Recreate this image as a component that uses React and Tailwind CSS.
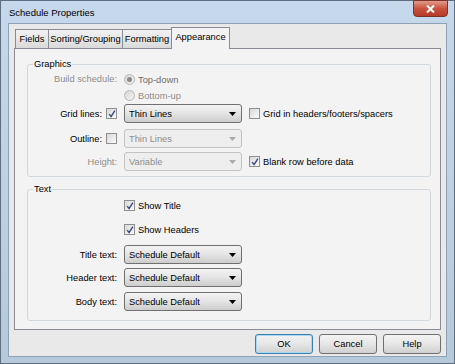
import { useState } from "react";

const font = { fontFamily: '"Liberation Sans", Arial, sans-serif' };

/* small win7 style checkbox */
const Check = ({ checked }) => (
  <span className="inline-flex w-[11px] h-[11px] border border-[#8e8f8f] bg-gradient-to-br from-[#d8d8d8] to-[#fbfbfb] items-center justify-center shrink-0">
    {checked && (
      <svg width="8" height="8" viewBox="0 0 9 9">
        <path d="M1.2 4.6 L3.5 7.3 L7.8 0.8" fill="none" stroke="#3d4d85" strokeWidth="1.6" />
      </svg>
    )}
  </span>
);

const Radio = ({ checked }) => (
  <span className="inline-flex w-[11px] h-[11px] rounded-full border border-[#b7b7b7] bg-gradient-to-br from-[#d6d6d6] to-[#f4f4f4] items-center justify-center shrink-0">
    {checked && <span className="w-[5px] h-[5px] rounded-full bg-[#8a8a8a]" />}
  </span>
);

const Select = ({ value, disabled }) => (
  <div className={`w-[118px] h-[19px] rounded-[3px] border flex items-center pl-[4px] pr-[5px] ${disabled ? "border-[#c3c3c3] bg-[#eeeeee] text-[#8d8d8d]" : "border-[#707070] bg-gradient-to-b from-[#f4f4f4] via-[#e4e4e4] to-[#cdcdcd] text-black"}`}>
    <span className="flex-1 truncate">{value}</span>
    <svg width="7" height="4" viewBox="0 0 7 4">
      <path d="M0 0 H7 L3.5 4 Z" fill={disabled ? "#a9a9a9" : "#000"} />
    </svg>
  </div>
);

const Row = ({ label, dim, check, checked, children, className = "" }) => (
  <div className={`flex items-center h-[19px] ${className}`}>
    <div className="w-[89px] flex items-center justify-end gap-[4px]">
      <span className={dim ? "text-[#8d8d8d]" : "text-black"}>{label}</span>
      {check && <Check checked={checked} />}
    </div>
    <div className="ml-[7px] flex items-center gap-[7px]">{children}</div>
  </div>
);

const Group = ({ title, className = "", children }) => (
  <div className={`relative border border-[#d2d9de] rounded-[3px] ml-[12px] mr-[9px] ${className}`}>
    <span className="absolute -top-[8px] left-[5px] px-[1px] bg-[#f3f3f3] leading-[14px]">{title}</span>
    {children}
  </div>
);

const Button = ({ children, focus }) => (
  <div className={`w-[58px] h-[20px] rounded-[3px] border flex items-center justify-center bg-gradient-to-b from-[#f3f3f3] via-[#e6e6e6] to-[#d0d0d0] ${focus ? "border-[#3c7fb1] shadow-[inset_0_0_0_1px_#a9d9f2]" : "border-[#707070]"}`}>
    {children}
  </div>
);

export default function App() {
  const [tab] = useState("Appearance");
  const tabs = [
    ["Fields", "w-[34px]"],
    ["Sorting/Grouping", "w-[75px]"],
    ["Formatting", "w-[50px]"],
    ["Appearance", "w-[59px]"],
  ];

  return (
    <div className="w-[455px] h-[364px] bg-gradient-to-b from-[#c6d8eb] to-[#b5c9dd] border border-[#5f6f80] flex flex-col text-[9.3px] leading-[12px] text-black" style={font}>
      {/* title bar */}
      <div className="h-[22px] flex items-start relative">
        <span className="ml-[8px] mt-[6px] text-[9.5px]">Schedule Properties</span>
        <div className="absolute right-[6px] top-[-1px] w-[35px] h-[17px] rounded-b-[4px] border border-[#7d3228] bg-gradient-to-b from-[#e09a8c] via-[#c9533f] to-[#b43b27] flex items-center justify-center">
          <svg width="9" height="8" viewBox="0 0 9 8">
            <path d="M1 0.5 L8 7.5 M8 0.5 L1 7.5" stroke="#fff" strokeWidth="2" />
          </svg>
        </div>
      </div>

      {/* client area */}
      <div className="flex-1 mx-[7px] mb-[6px] border border-[#8ea2b6] bg-[#e9e9e9] flex flex-col px-[5px] pt-[3px]">
        {/* tabs */}
        <div className="flex items-end h-[21px] pl-[1px]">
          {tabs.map(([t, w]) => (
            <div
              key={t}
              className={`${w} flex justify-center border border-[#898c95] border-b-0 -ml-[1px] first:ml-0 ${t === tab ? "h-[22px] bg-[#f3f3f3] relative z-10 -mb-[1px] pt-[3px]" : "h-[19px] bg-gradient-to-b from-[#f2f2f2] to-[#dadada] pt-[3px]"}`}
            >
              {t}
            </div>
          ))}
        </div>

        {/* tab panel */}
        <div className="h-[282px] border border-[#898c95] bg-[#f3f3f3] flex flex-col pt-[15px]">
          <Group title="Graphics" className="h-[113px] pt-[7px]">
            <div className="flex items-start">
              <div className="w-[89px] text-right text-[#8d8d8d] leading-[15px]">Build schedule:</div>
              <div className="ml-[7px] flex flex-col gap-[1px] text-[#6e6e6e]">
                <div className="flex items-center gap-[3px] h-[15px]"><Radio checked /> Top-down</div>
                <div className="flex items-center gap-[3px] h-[15px] text-[#8d8d8d]"><Radio /> Bottom-up</div>
              </div>
            </div>
            <Row label="Grid lines:" check checked className="mt-[1px]">
              <Select value="Thin Lines" />
              <div className="flex items-center gap-[3px]"><Check /> Grid in headers/footers/spacers</div>
            </Row>
            <Row label="Outline:" check className="mt-[6px]">
              <Select value="Thin Lines" disabled />
            </Row>
            <Row label="Height:" dim className="mt-[4px]">
              <Select value="Variable" disabled />
              <div className="flex items-center gap-[3px]"><Check checked /> Blank row before data</div>
            </Row>
          </Group>

          <Group title="Text" className="h-[132px] mt-[12px] pt-[6px]">
            <Row label="">
              <div className="flex items-center gap-[3px]"><Check checked /> Show Title</div>
            </Row>
            <Row label="" className="mt-[5px]">
              <div className="flex items-center gap-[3px]"><Check checked /> Show Headers</div>
            </Row>
            <Row label="Title text:" className="mt-[6px]">
              <Select value="Schedule Default" />
            </Row>
            <Row label="Header text:" className="mt-[4px]">
              <Select value="Schedule Default" />
            </Row>
            <Row label="Body text:" className="mt-[5px]">
              <Select value="Schedule Default" />
            </Row>
          </Group>
        </div>

        {/* buttons */}
        <div className="flex justify-end gap-[6px] mt-[4px]">
          <Button focus>OK</Button>
          <Button>Cancel</Button>
          <Button>Help</Button>
        </div>
      </div>
    </div>
  );
}
